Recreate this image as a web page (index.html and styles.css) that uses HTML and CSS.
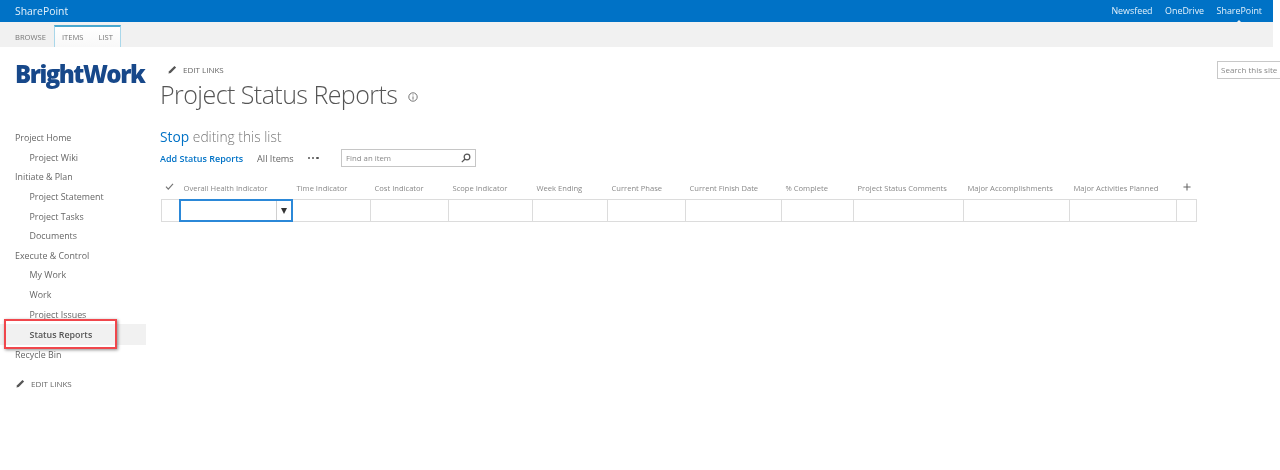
FILE: index.html
```html
<!DOCTYPE html>
<html lang="en">
<head>
<meta charset="utf-8">
<title>Project Status Reports</title>
<link rel="stylesheet" href="styles.css">
</head>
<body>
<div class="page">
  <header class="suitebar">
    <span class="brand">SharePoint</span>
    <nav class="suitelinks">
      <a>Newsfeed</a><a>OneDrive</a><a class="current">SharePoint</a>
    </nav>
  </header>
  <div class="ribbon">
    <span class="tab first">BROWSE</span>
    <div class="ctxgroup"><span class="tab">ITEMS</span><span class="tab">LIST</span></div>
  </div>
  <div class="body">
    <aside class="side">
      <div class="logo">BrightWork</div>
      <ul class="nav">
        <li>Project Home</li>
        <li class="sub">Project Wiki</li>
        <li>Initiate &amp; Plan</li>
        <li class="sub">Project Statement</li>
        <li class="sub">Project Tasks</li>
        <li class="sub">Documents</li>
        <li>Execute &amp; Control</li>
        <li class="sub">My Work</li>
        <li class="sub">Work</li>
        <li class="sub">Project Issues</li>
        <li class="sub selected">Status Reports</li>
        <li>Recycle Bin</li>
      </ul>
      <div class="editlinks navedit">
        <svg class="pencil" viewBox="0 0 10 10"><path d="M0.5 9.5 L1.2 7 L7.2 1 L9 2.8 L3 8.8 Z"/></svg>
        <span>EDIT LINKS</span>
      </div>
    </aside>
    <main class="main">
      <div class="searchsite">Search this site</div>
      <div class="editlinks">
        <svg class="pencil" viewBox="0 0 10 10"><path d="M0.5 9.5 L1.2 7 L7.2 1 L9 2.8 L3 8.8 Z"/></svg>
        <span>EDIT LINKS</span>
      </div>
      <h1 class="title">Project Status Reports
        <svg class="info" viewBox="0 0 10 10"><circle cx="5" cy="5" r="4.2"/><path d="M5 4.4 V7.6 M5 2.4 V3.4"/></svg>
      </h1>
      <div class="stop"><a>Stop</a> editing this list</div>
      <div class="views">
        <a class="add">Add Status Reports</a>
        <span class="allitems">All Items</span>
        <span class="more"><i></i><i></i><i></i></span>
        <div class="find">
          <span>Find an item</span>
          <svg class="glass" viewBox="0 0 12 12"><circle cx="7.2" cy="4.8" r="3.4"/><path d="M4.8 7.2 L1 11"/></svg>
        </div>
      </div>
      <table class="grid">
        <colgroup>
          <col class="c18"><col class="c113"><col class="c78"><col class="c78"><col class="c84"><col class="c75"><col class="c78"><col class="c96"><col class="c72"><col class="c110"><col class="c106"><col class="c107"><col class="c20">
        </colgroup>
        <thead>
          <tr>
            <th class="check"><svg class="tick" viewBox="0 0 10 8"><path d="M1 4.2 L3.6 7 L9 1"/></svg></th>
            <th>Overall Health Indicator</th><th>Time Indicator</th><th>Cost Indicator</th><th>Scope Indicator</th><th>Week Ending</th><th>Current Phase</th><th>Current Finish Date</th><th>% Complete</th><th>Project Status Comments</th><th>Major Accomplishments</th><th>Major Activities Planned</th>
            <th class="plus"><svg class="plusicon" viewBox="0 0 9 9"><path d="M4.5 0.5 V8.5 M0.5 4.5 H8.5"/></svg></th>
          </tr>
        </thead>
        <tbody>
          <tr>
            <td></td>
            <td class="active"><span class="dropbtn"><i class="arrow"></i></span></td>
            <td></td><td></td><td></td><td></td><td></td><td></td><td></td><td></td><td></td><td></td><td></td>
          </tr>
        </tbody>
      </table>
    </main>
  </div>
  <div class="callout"></div>
</div>
</body>
</html>
```
FILE: styles.css
```css
* { box-sizing: border-box; }
html, body { margin: 0; padding: 0; background: #fff; }
.page {
  position: relative;
  width: 1280px;
  height: 470px;
  overflow: hidden;
  font-family: "Open Sans", "Noto Sans", sans-serif;
  color: #666;
  filter: blur(0.35px);
}
.suitebar {
  width: 1273px;
  height: 22px;
  background: #0072c6;
  display: flex;
  align-items: center;
  justify-content: space-between;
  padding: 0 11px 0 15px;
  color: #e3f1fb;
}
.brand { font-size: 10.4px; }
.suitelinks { display: flex; gap: 12.5px; font-size: 8.9px; position: relative; height: 22px; align-items: center; padding-bottom: 1px; }
.current { position: relative; }
.current::after {
  content: "";
  position: absolute;
  left: 50%;
  bottom: -6px;
  margin-left: -3px;
  border: 3px solid transparent;
  border-top: 0;
  border-bottom-color: #f1f1f1;
}
.ribbon {
  width: 1273px;
  height: 25px;
  background: #f1f1f1;
  display: flex;
  align-items: flex-end;
  padding-left: 15px;
  font-size: 7.6px;
  color: #777;
}
.tab { display: inline-block; line-height: 20px; }
.first { width: 39px; }
.ctxgroup {
  height: 22px;
  width: 67px;
  background: linear-gradient(#fff, #f8f8f8);
  border: 1px solid #a9d7ea;
  border-top: 2px solid #4aa8cf;
  border-bottom: 0;
  display: flex;
  gap: 15px;
  padding-left: 7px;
}
.body { display: flex; }
.side { width: 160px; flex: none; }
.logo {
  font-size: 24px;
  font-weight: 800;
  letter-spacing: -1.5px;
  line-height: 30px;
  color: #17488a;
  margin: 12px 0 0 15px;
}
.nav {
  list-style: none;
  margin: 39px 0 0;
  padding: 0;
  width: 146px;
  font-size: 8.9px;
}
.nav li { height: 19.65px; line-height: 19px; padding-left: 15px; white-space: nowrap; }
.nav .sub { padding-left: 29.5px; }
.nav .selected { background: #f1f1f1; font-weight: 600; height: 21px; line-height: 21px; color: #555; }
.editlinks {
  display: flex;
  align-items: center;
  gap: 6px;
  font-size: 8px;
  color: #666;
  height: 12px;
  margin-left: 8px;
}
.main .editlinks { margin-top: -1px; }
.navedit { margin: 12px 0 0 16px; }
.pencil { width: 9px; height: 9px; fill: #555; }
.main { position: relative; flex: 1; padding-top: 17px; }
.searchsite {
  position: absolute;
  left: 1057px;
  top: 14px;
  width: 90px;
  height: 18px;
  border: 1px solid #c8c8c8;
  font-size: 8px;
  line-height: 16px;
  padding-left: 3px;
  color: #888;
}
.title {
  margin: 2px 0 0;
  font-size: 25px;
  font-weight: 300;
  line-height: 34px;
  letter-spacing: -0.55px;
  color: #555;
  display: flex;
  align-items: center;
  gap: 11px;
}
.info { width: 10px; height: 10px; margin-top: 6px; fill: none; stroke: #666; stroke-width: 0.9; }
.stop { margin-top: 16px; font-size: 13.8px; line-height: 20px; color: #777; font-weight: 300; }
.stop a { color: #0072c6; font-weight: 400; }
.views { display: flex; align-items: center; height: 18px; margin-top: 2px; font-size: 9.2px; }
.add { color: #0072c6; font-weight: 600; width: 97px; font-size: 9px; }
.allitems { width: 51px; color: #666; }
.more { width: 33px; display: flex; gap: 2px; }
.more i { width: 2.2px; height: 2.2px; border-radius: 50%; background: #555; }
.find {
  width: 135px;
  height: 18px;
  border: 1px solid #c6c6c6;
  display: flex;
  align-items: center;
  justify-content: space-between;
  padding: 0 4px 0 4px;
  font-size: 7.8px;
  color: #888;
}
.glass { width: 10px; height: 10px; fill: none; stroke: #555; stroke-width: 1.5; }
.grid {
  table-layout: fixed;
  border-collapse: collapse;
  margin: 12px 0 0 1px;
  width: 1035px;
}
.c18 { width: 18px; } .c113 { width: 113px; } .c78 { width: 78px; } .c84 { width: 84px; }
.c75 { width: 75px; } .c96 { width: 96px; } .c72 { width: 72px; } .c110 { width: 110px; }
.c106 { width: 106px; } .c107 { width: 107px; } .c20 { width: 20px; }
.grid th {
  height: 20px;
  padding: 0 0 2px 4px;
  font-size: 7.6px;
  font-weight: 400;
  color: #888;
  text-align: left;
  white-space: nowrap;
  overflow: hidden;
}
.grid th.check { padding: 0 0 4px 3px; }
.grid th.plus { padding: 0 0 3px 6px; }
.plusicon { display: block; width: 8px; height: 8px; stroke: #666; stroke-width: 1.2; fill: none; }
.tick { width: 9px; height: 7px; fill: none; stroke: #777; stroke-width: 1.4; }
.grid td { height: 22px; padding: 0; border: 1px solid #dcdcdc; }
.grid td.active { position: relative; }
.dropbtn {
  position: absolute;
  left: -1px;
  top: -1px;
  right: -1px;
  bottom: -1px;
  border: 2px solid #2b88d8;
  display: flex;
  justify-content: flex-end;
}
.dropbtn .arrow {
  width: 15px;
  border-left: 1px solid #d0d0d0;
  position: relative;
}
.arrow::after {
  content: "";
  position: absolute;
  left: 3.5px;
  top: 7px;
  border-style: solid;
  border-width: 6px 3.5px 0;
  border-color: #333 transparent transparent;
}
.callout {
  position: absolute;
  left: 4px;
  top: 319px;
  width: 113px;
  height: 30px;
  border: 2px solid #f0474c;
  box-shadow: 1px 1px 3px rgba(0, 0, 0, .45);
}
```
